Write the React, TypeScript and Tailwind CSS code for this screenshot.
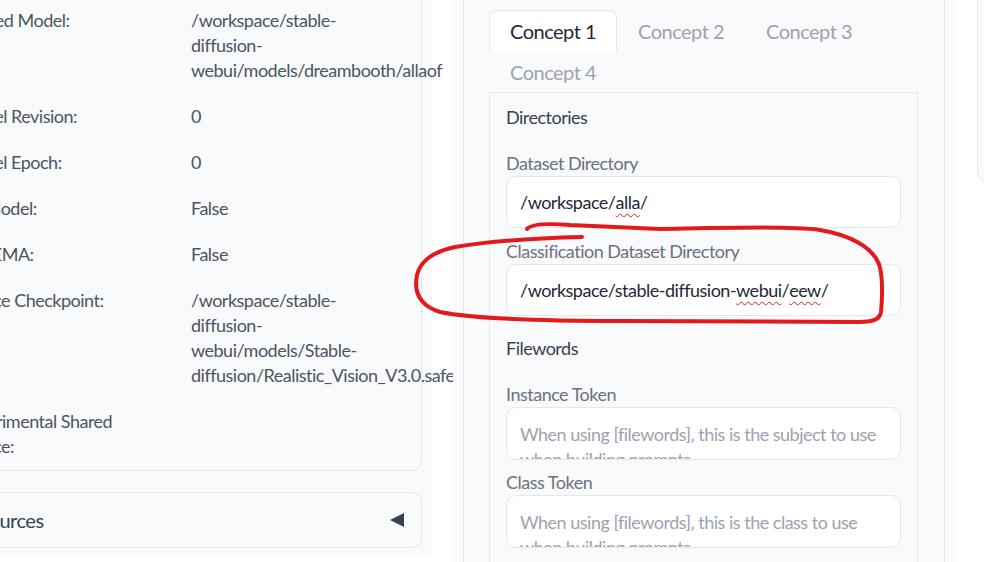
import React from "react";

const infoRows = [
  { label: "Loaded Model:", value: "/workspace/stable-diffusion-webui/models/dreambooth/allaof" },
  { label: "Model Revision:", value: "0" },
  { label: "Model Epoch:", value: "0" },
  { label: "V2 Model:", value: "False" },
  { label: "Has EMA:", value: "False" },
  {
    label: "Source Checkpoint:",
    value: "/workspace/stable-diffusion-webui/models/Stable-diffusion/Realistic_Vision_V3.0.safetensors",
  },
  { label: "Experimental Shared Source:", value: "" },
];

const tabs = ["Concept 1", "Concept 2", "Concept 3", "Concept 4"];

const Typo = ({ children }: { children: React.ReactNode }) => (
  <span className="underline decoration-wavy decoration-[#e4191c] decoration-1 underline-offset-[4px]">
    {children}
  </span>
);

const Label = ({ children, className = "" }: { children: React.ReactNode; className?: string }) => (
  <div className={`text-[18px] leading-[25px] text-[#6b7280] ${className}`}>{children}</div>
);

const TextBox = ({ children }: { children: React.ReactNode }) => (
  <div className="h-[52px] w-[395px] rounded-[10px] border border-[#e5e7eb] bg-white px-[13px] flex items-center text-[18px] text-[#1f2937] whitespace-nowrap">
    {children}
  </div>
);

const Placeholder = ({ text }: { text: string }) => (
  <div className="h-[53px] w-[395px] overflow-hidden rounded-[10px] border border-[#e5e7eb] bg-white px-[13px] pt-[14px] text-[18px] leading-[25px] text-[#9ca3af]">
    {text}
  </div>
);

const ModelInfo = () => (
  <div className="w-[453px] shrink-0 overflow-hidden">
    <div className="-ml-[70px] -mt-[30px] w-[502px] rounded-b-[10px] bg-[#f9fafb] p-[10px] pb-[9px]">
      <div className="rounded-[10px] border border-[#e5e7eb] bg-[#f9fafb] pl-[18px] pr-[21px] pt-[27px] pb-[11px]">
        <div className="grid grid-cols-[232px_210px] gap-y-[21px] text-[18px] leading-[25px] text-[#4b5563]">
          {infoRows.map((row) => (
            <React.Fragment key={row.label}>
              <div className="pr-[40px]">{row.label}</div>
              <div className="min-h-[25px]">{row.value}</div>
            </React.Fragment>
          ))}
        </div>
      </div>
      <div className="mt-[21px] flex h-[56px] items-center justify-between rounded-[10px] border border-[#e5e7eb] bg-[#f9fafb] pl-[18px] pr-[17px]">
        <span className="text-[20px] text-[#374151]">Resources</span>
        <svg width="14" height="14" viewBox="0 0 14 14">
          <polygon points="14,0 14,14 0,7" fill="#374151" />
        </svg>
      </div>
    </div>
  </div>
);

const ConceptTabs = () => (
  <div className="w-[502px] shrink-0 bg-[#f9fafb] px-[10px]">
    <div className="h-full border-x border-[#e5e7eb] pl-[25px] pr-[26px] pt-[10px]">
      <div className="flex flex-wrap">
        {tabs.map((tab, i) => (
          <div
            key={tab}
            className={
              i === 0
                ? "flex h-[41px] w-[128px] items-center justify-center rounded-t-[8px] border border-b-0 border-[#e5e7eb] bg-white text-[20px] text-[#1f2937]"
                : "flex h-[41px] w-[128px] items-center justify-center border border-b-0 border-transparent text-[20px] text-[#9ca3af]"
            }
          >
            {tab}
          </div>
        ))}
      </div>
      <div className="h-[480px] border border-b-0 border-[#e5e7eb] px-[16px] pt-[12px]">
        <div className="text-[18px] leading-[25px] text-[#374151]">Directories</div>
        <Label className="mt-[21px]">Dataset Directory</Label>
        <TextBox>
          /workspace/<Typo>alla</Typo>/
        </TextBox>
        <Label className="mt-[11px]">Classification Dataset Directory</Label>
        <TextBox>
          /workspace/stable-diffusion-<Typo>webui</Typo>/<Typo>eew</Typo>/
        </TextBox>
        <div className="mt-[20px] text-[18px] leading-[25px] text-[#374151]">Filewords</div>
        <Label className="mt-[21px]">Instance Token</Label>
        <Placeholder text="When using [filewords], this is the subject to use when building prompts" />
        <Label className="mt-[10px]">Class Token</Label>
        <Placeholder text="When using [filewords], this is the class to use when building prompts" />
      </div>
    </div>
  </div>
);

export default function App() {
  return (
    <div className="relative flex h-[562px] w-[984px] overflow-hidden bg-white font-['Lato',sans-serif] tracking-[-0.5px]">
      <ModelInfo />
      <ConceptTabs />
      <div className="ml-[22px] w-[40px] shrink-0">
        <div className="-mt-[20px] h-[203px] rounded-bl-[10px] border border-[#e5e7eb] bg-[#f9fafb]" />
      </div>

      {/* red marker circle drawn over the screenshot */}
      <svg className="pointer-events-none absolute left-0 top-0" width="984" height="562" viewBox="0 0 984 562">
        <path
          d="M527 229 C531 224, 545 223, 570 225 L660 229 C720 228, 790 226, 820 230 C850 235, 872 247, 879 264 C884 280, 882 300, 881 312 C880 320, 872 322, 860 322 L620 321 C540 321, 470 318, 440 312 C418 305, 414 290, 417 275 C420 262, 432 252, 455 247 C490 241, 540 238, 582 237"
          fill="none"
          stroke="#e4191c"
          strokeWidth="4"
          strokeLinecap="round"
          strokeLinejoin="round"
        />
      </svg>
    </div>
  );
}
